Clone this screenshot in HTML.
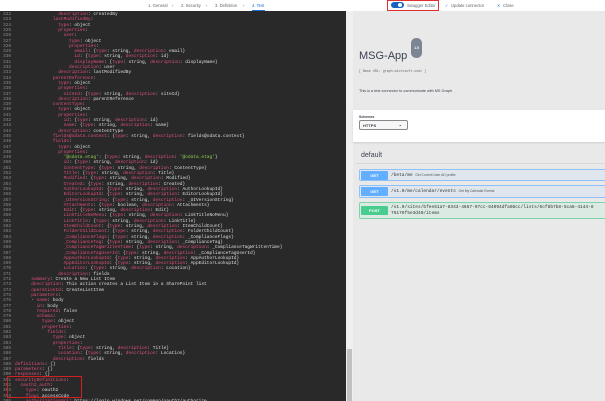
<!DOCTYPE html>
<html><head><meta charset="utf-8"><style>
*{margin:0;padding:0;box-sizing:border-box}
body{width:605px;height:401px;overflow:hidden;background:#fff;font-family:"Liberation Sans",sans-serif;position:relative}
.top{position:absolute;left:0;top:0;width:605px;height:11px;background:#fff;font-size:4.2px;color:#666}
.top span{position:absolute;top:3px;white-space:nowrap}
.ed{position:absolute;left:0;top:11px;width:346px;height:390px;background:#292929;overflow:hidden}
.ln{position:absolute;left:0;font:4.5px/5.3px "Liberation Mono",monospace;white-space:pre;color:#ddd}
.ln b{font-weight:normal;color:#8a8a8a;display:inline-block;width:15px;padding-left:3px}
.k{color:#e0507a}.s{color:#8fd14f}
.sb{position:absolute;left:346px;top:11px;width:7px;height:390px;background:#efefef}
.th{position:absolute;left:347px;top:349px;width:5px;height:52px;background:#c2c2c2}
.rp{position:absolute;left:353px;top:11px;width:252px;height:390px;background:#e9e9e9}
.row{position:absolute;left:359px;width:250px;border-radius:2px;font:4.5px "Liberation Mono",monospace;color:#333}
.bd{position:absolute;left:1px;top:1px;width:27px;height:9px;border-radius:1px;color:#fff;font:bold 4px "Liberation Sans",sans-serif;text-align:center;line-height:9px}
</style></head><body>
<div class="top">
<span style="left:148px">1. General</span><span style="left:172px">›</span>
<span style="left:181px">2. Security</span><span style="left:206px">›</span>
<span style="left:215px">3. Definition</span><span style="left:243px">›</span>
<span style="left:252px;color:#1f6fd0">4. Test</span>
<div style="position:absolute;left:252px;top:10px;width:13px;height:1px;background:#1f6fd0"></div>
<div style="position:absolute;left:387px;top:0;width:52px;height:11px;border:1px solid #e03030"></div>
<div style="position:absolute;left:391px;top:2px;width:13px;height:6px;border-radius:3px;background:#1565c0"></div>
<div style="position:absolute;left:398px;top:3px;width:4px;height:4px;border-radius:2px;background:#fff"></div>
<span style="left:407px">Swagger Editor</span>
<span style="left:445px;color:#1f6fd0">✓</span><span style="left:451px">Update connector</span>
<span style="left:497px;color:#1f6fd0">✕</span><span style="left:503px">Close</span>
</div>
<div class="ed" id="ed"></div>
<div class="sb"></div><div class="th"></div>
<div class="rp"></div>
<div style="position:absolute;left:359px;top:50px;font-size:11px;color:#3b4151">MSG-App</div>
<div style="position:absolute;left:411px;top:38px;width:11px;height:20px;border-radius:5px;background:#7d8492;color:#fff;font-size:3.5px;text-align:center;line-height:20px;font-weight:bold">1.0</div>
<div style="position:absolute;left:359px;top:69px;font:3.3px 'Liberation Mono',monospace;color:#666">[ Base URL: graph.microsoft.com/ ]</div>
<div style="position:absolute;left:359px;top:89px;font-size:3.8px;color:#3b4151">This is a test connector to communicate with MS Graph</div>
<div style="position:absolute;left:353px;top:110px;width:252px;height:32px;background:#fff;box-shadow:0 1px 2px rgba(0,0,0,.12)"></div>
<div style="position:absolute;left:359px;top:115px;font-size:3.5px;color:#3b4151;font-weight:bold">Schemes</div>
<div style="position:absolute;left:359px;top:120px;width:49px;height:10px;border:1px solid #888;border-radius:2px;background:#f7f7f7;font:bold 4px 'Liberation Sans',sans-serif;color:#3b4151;padding:2px 0 0 3px">HTTPS<span style="position:absolute;right:5px;top:1px">⌄</span></div>
<div style="position:absolute;left:361px;top:152px;font-size:7px;color:#3b4151">default</div>
<div style="position:absolute;left:356px;top:163px;width:249px;height:1px;background:#d8d8d8"></div>
<div class="row" style="top:169px;height:12px;background:#dfe6ee;border:1px solid #8fc1f6"><div class="bd" style="background:#61affe">GET</div><span style="position:absolute;left:31px;top:3px">/beta/me <span style="font:3.3px 'Liberation Sans';color:#555">Get Current User AD profile</span></span></div>
<div class="row" style="top:185px;height:13px;background:#dfe6ee;border:1px solid #8fc1f6"><div class="bd" style="background:#61affe">GET</div><span style="position:absolute;left:31px;top:3px">/v1.0/me/calendar/events <span style="font:3.3px 'Liberation Sans';color:#555">Get My Calendar Events</span></span></div>
<div class="row" style="top:202px;height:17px;background:#dbeae2;border:1px solid #7fd3ab"><div class="bd" style="background:#49cc90;top:3px">POST</div><span style="position:absolute;left:31px;top:2px;line-height:5.5px;white-space:nowrap">/v1.0/sites/bfee51a7-8343-4667-97cc-64094dfa08cc/lists/6cf8b7b8-5ca6-4144-8<br>76176f5e3d40/items</span></div>
<div style="position:absolute;left:7px;top:376px;width:75px;height:22px;border:1px solid #d02020"></div>
<script>
var L=[[16,"description: createdBy"],[14,"lastModifiedBy:"],[16,"type: object"],[16,"properties:"],[18,"user:"],[20,"type: object"],[20,"properties:"],[22,"email: {type: string, description: email}"],[22,"id: {type: string, description: id}"],[22,"displayName: {type: string, description: displayName}"],[20,"description: user"],[16,"description: lastModifiedBy"],[14,"parentReference:"],[16,"type: object"],[16,"properties:"],[18,"siteId: {type: string, description: siteId}"],[16,"description: parentReference"],[14,"contentType:"],[16,"type: object"],[16,"properties:"],[18,"id: {type: string, description: id}"],[18,"name: {type: string, description: name}"],[16,"description: contentType"],[14,"fields@odata.context: {type: string, description: fields@odata.context}"],[14,"fields:"],[16,"type: object"],[16,"properties:"],[18,"'@odata.etag': {type: string, description: '@odata.etag'}"]];
["id","ContentType","Title","Modified","Created","AuthorLookupId","EditorLookupId","_UIVersionString"].forEach(function(n){L.push([18,n+": {type: string, description: "+n+"}"])});
L.push([18,"Attachments: {type: boolean, description: Attachments}"]);
["Edit","LinkTitleNoMenu","LinkTitle","ItemChildCount","FolderChildCount","_ComplianceFlags","_ComplianceTag","_ComplianceTagWrittenTime","_ComplianceTagUserId","AppAuthorLookupId","AppEditorLookupId","Location"].forEach(function(n){L.push([18,n+": {type: string, description: "+n+"}"])});
L=L.concat([[16,"description: fields"],[6,"summary: Create a New List Item"],[6,"description: This action creates a List Item in a SharePoint list"],[6,"operationId: CreateListItem"],[6,"parameters:"],[6,"- name: body"],[8,"in: body"],[8,"required: false"],[8,"schema:"],[10,"type: object"],[10,"properties:"],[12,"fields:"],[14,"type: object"],[14,"properties:"],[16,"Title: {type: string, description: Title}"],[16,"Location: {type: string, description: Location}"],[14,"description: fields"],[0,"definitions: {}"],[0,"parameters: {}"],[0,"responses: {}"],[0,"securityDefinitions:"],[2,"oauth2_auth:"],[4,"type: oauth2"],[4,"flow: accessCode"],[4,"authorizationUrl: https://login.windows.net/common/oauth2/authorize"]]);
function esc(t){return t.replace(/&/g,"&amp;").replace(/</g,"&lt;")}
function hl(t){
 t=esc(t);
 t=t.replace(/('[^']*')/g,'<span class="s">$1</span>');
 t=t.replace(/^(- )?([\w@.'\-]+|<span class="s">[^<]*<\/span>):/,function(m,d,k){return (d||"")+'<span class="k">'+k+'</span>:'});
 t=t.replace(/\{type:/g,'{<span class="k">type</span>:').replace(/, description:/g,', <span class="k">description</span>:');
 return t;}
var h="";
for(var i=0;i<L.length;i++){var y=1+i*5.3;
 h+='<div class="ln" style="top:'+y.toFixed(1)+'px"><b>'+(322+i)+'</b>'+" ".repeat(L[i][0])+hl(L[i][1])+'</div>';}
document.getElementById("ed").innerHTML=h;
</script>
</body></html>
